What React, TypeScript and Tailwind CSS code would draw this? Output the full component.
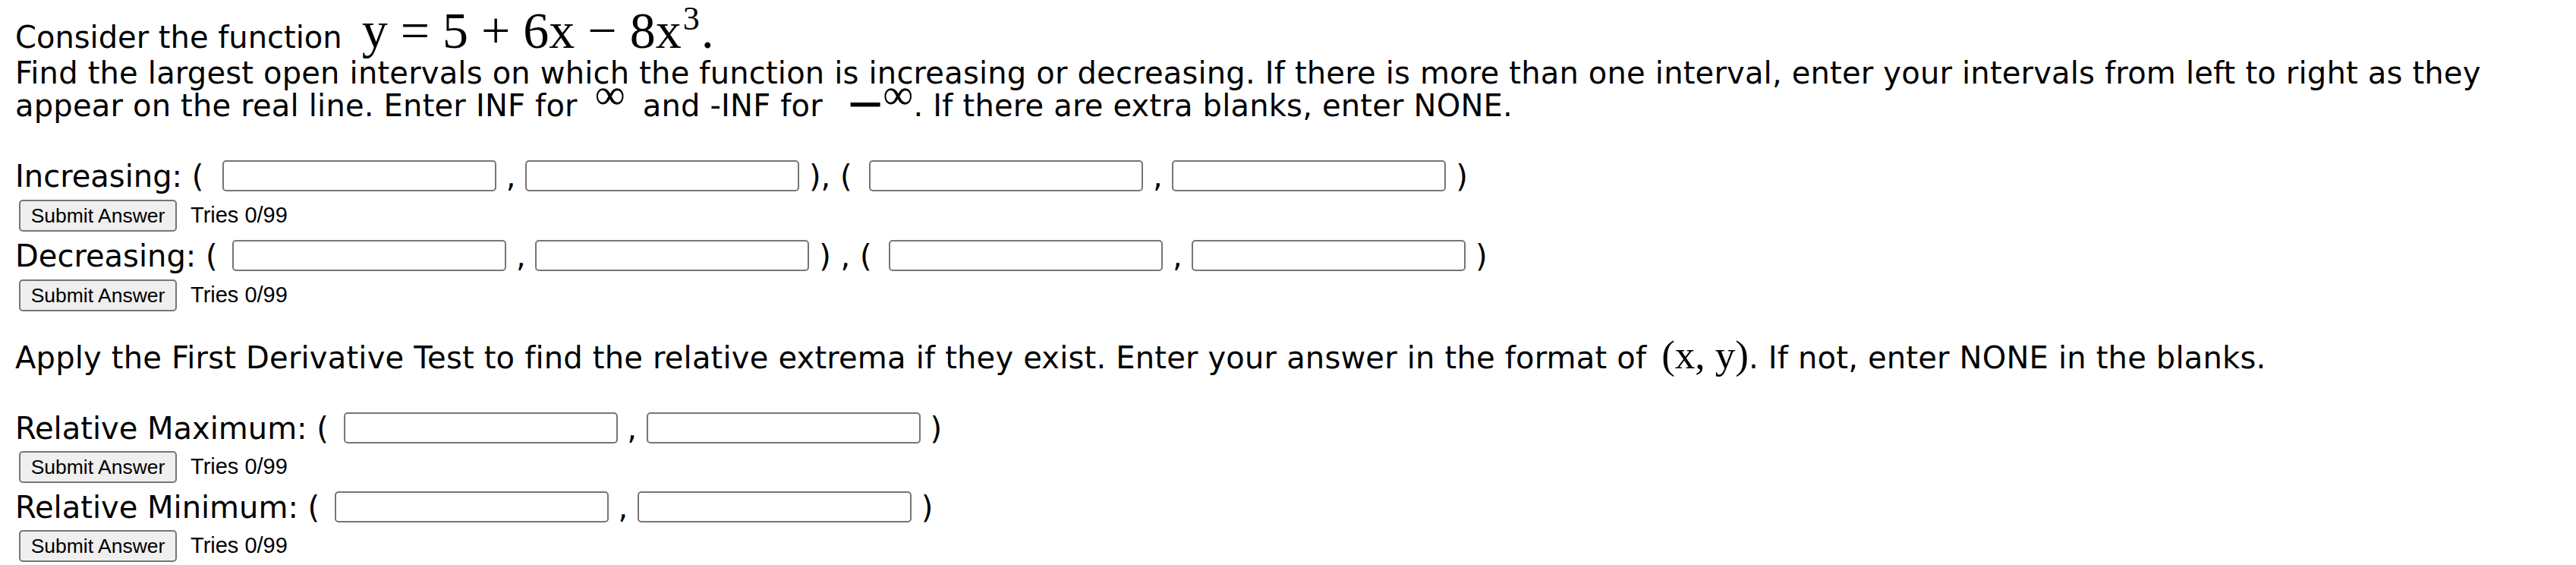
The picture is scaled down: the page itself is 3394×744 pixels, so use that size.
import type { ReactNode } from 'react';

function Field() {
  return (
    <input
      type="text"
      aria-label="answer"
      className="h-[41px] w-[361px] shrink-0 rounded-[5px] border-2 border-[#767676] bg-white"
    />
  );
}

function Txt({ children, className = '' }: { children: ReactNode; className?: string }) {
  return <span className={`whitespace-pre leading-none ${className}`}>{children}</span>;
}

function Inf({ className = '' }: { className?: string }) {
  return (
    <span className={`font-['Liberation_Serif',serif] text-[56px] leading-[0] align-[10px] ${className}`}>∞</span>
  );
}

function SubmitRow({ className = '' }: { className?: string }) {
  return (
    <div className={`flex h-[42px] items-center font-['Liberation_Sans',Arial,sans-serif] ${className}`}>
      <button className="ml-[5px] h-[42px] w-[208px] rounded-[5px] border-2 border-[#767676] bg-[#efefef] text-[26.5px] text-black">
        Submit Answer
      </button>
      <span className="ml-[18px] text-[29px]">Tries 0/99</span>
    </div>
  );
}

export default function App() {
  return (
    <div className="min-h-screen bg-white px-[20px] font-['DejaVu_Sans',Verdana,sans-serif] text-[40px] text-black">
      {/* Function */}
      <div className="h-[75px] whitespace-nowrap pt-[25px] leading-[43px]">
        Consider the function
        <span className="ml-[26px] font-['Liberation_Serif',serif] text-[68px] leading-[0]">
          y = 5 + 6x − 8x
          <span className="ml-[2px] text-[44px] align-[24px]">3</span>
          <span className="ml-[2px]">.</span>
        </span>
      </div>

      {/* Instructions */}
      <p className="whitespace-nowrap leading-[43px] tracking-[0.2px]">
        Find the largest open intervals on which the function is increasing or decreasing. If there is more than one
        interval, enter your intervals from left to right as they
        <br />
        appear on the real line. Enter INF for <Inf className="ml-[10px] mr-[10px]" /> and -INF for
        <span className="ml-[30px] mr-[9px] inline-block origin-left scale-x-[1.3] text-[48px] font-bold leading-[0]">
          −
        </span>
        <Inf />. If there are extra blanks, enter NONE.
      </p>

      {/* Increasing */}
      <div className="mt-[50px] flex h-[41px] items-center">
        <Txt className="pr-[12px]">Increasing: ( </Txt>
        <Field />
        <Txt> , </Txt>
        <Field />
        <Txt className="pr-[10px]"> ), ( </Txt>
        <Field />
        <Txt> , </Txt>
        <Field />
        <Txt> )</Txt>
      </div>
      <SubmitRow className="mt-[11px]" />

      {/* Decreasing */}
      <div className="mt-[11px] flex h-[41px] items-center">
        <Txt className="pr-[7px]">Decreasing: ( </Txt>
        <Field />
        <Txt> , </Txt>
        <Field />
        <Txt className="pr-[10px]"> ) , ( </Txt>
        <Field />
        <Txt> , </Txt>
        <Field />
        <Txt> )</Txt>
      </div>
      <SubmitRow className="mt-[11px]" />

      {/* Extrema */}
      <p className="mt-[40px] h-[43px] whitespace-nowrap leading-[43px] tracking-[0.2px]">
        Apply the First Derivative Test to find the relative extrema if they exist. Enter your answer in the format of
        <span className="ml-[20px] font-['Liberation_Serif',serif] text-[53px] leading-[0] tracking-normal">(x, y)</span>.
        If not, enter NONE in the blanks.
      </p>

      <div className="mt-[50px] flex h-[41px] items-center">
        <Txt className="pr-[7px]">Relative Maximum: ( </Txt>
        <Field />
        <Txt> , </Txt>
        <Field />
        <Txt> )</Txt>
      </div>
      <SubmitRow className="mt-[10px]" />

      <div className="mt-[11px] flex h-[41px] items-center">
        <Txt className="pr-[7px]">Relative Minimum: ( </Txt>
        <Field />
        <Txt> , </Txt>
        <Field />
        <Txt> )</Txt>
      </div>
      <SubmitRow className="mt-[10px]" />
    </div>
  );
}
